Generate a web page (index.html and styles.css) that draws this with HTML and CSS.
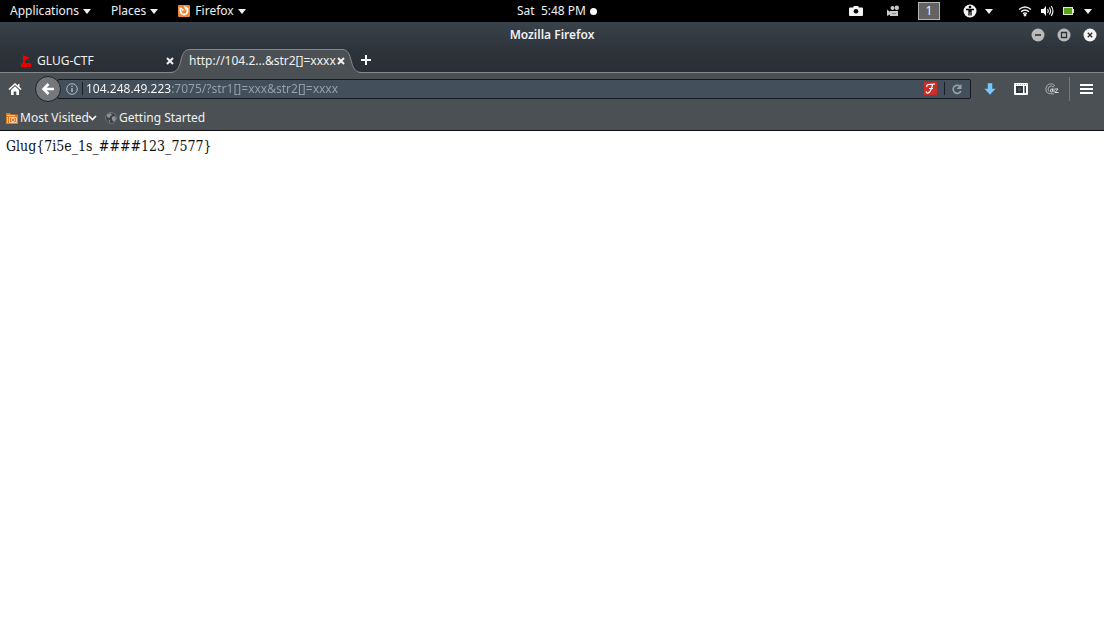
FILE: index.html
```html
<!DOCTYPE html>
<html lang="en">
<head>
    <meta charset="UTF-8">
    <meta name="viewport" content="width=device-width, initial-scale=1.0">
    <title>Mozilla Firefox</title>
    <link rel="stylesheet" href="styles.css">
</head>
<body>
    <header class="top-bar">
        <nav class="menus">
            <button class="menu">Applications <span class="caret"></span></button>
            <button class="menu">Places <span class="caret"></span></button>
            <button class="menu app-menu">
                <svg class="app-icon" width="12" height="12" viewBox="0 0 12 12">
                    <rect width="12" height="12" rx="1" fill="#ed8936"/>
                    <path d="M2.500 2.500V6a3.500 3.500 0 0 0 7 0V3.500L7.500 2.500l.5 2" fill="none" stroke="#fff" stroke-width="1.800"/>
                    <path d="M3 3l3 1.500-1.500 2z" fill="#fff"/>
                </svg>
                Firefox <span class="caret"></span>
            </button>
        </nav>
        <button class="clock">Sat&nbsp; 5:48 PM <span class="dot"></span></button>
        <div class="status">
            <button class="camera" aria-label="Screenshot">
                <svg width="14" height="12" viewBox="0 0 14 12">
                    <path d="M1 2.500h3L5 1h4l1 1.500h3a1 1 0 0 1 1 1V10a1 1 0 0 1-1 1H1a1 1 0 0 1-1-1V3.500a1 1 0 0 1 1-1z" fill="#f4f4f4"/>
                    <circle cx="7" cy="6.300" r="2.300" fill="#000"/>
                </svg>
            </button>
            <button class="recorder" aria-label="Record screen">
                <svg width="14" height="12" viewBox="0 0 14 12" fill="#c9c9c9">
                    <circle cx="6.500" cy="3" r="2"/>
                    <circle cx="10.800" cy="2.700" r="2.200"/>
                    <path d="M1 4.500l3 2.200V6h8v5H4V9.500L1 11z"/>
                    <path d="M6 8.500h4" stroke="#888"/>
                </svg>
            </button>
            <button class="workspace">1</button>
            <button class="access" aria-label="Accessibility">
                <svg width="14" height="14" viewBox="0 0 14 14">
                    <circle cx="7" cy="7" r="6.500" fill="#f4f4f4"/>
                    <circle cx="7" cy="3" r="1.300" fill="#000"/>
                    <path d="M3 5.500h8M7 5v3M6 6v5.500M8 6v5.500" stroke="#000" stroke-width="1.300"/>
                </svg>
                <span class="caret"></span>
            </button>
            <button class="system" aria-label="System menu">
                <svg width="14" height="12" viewBox="0 0 14 12" fill="none" stroke="#eee" stroke-width="1.300">
                    <path d="M1 4.500q6-5 12 0M3 6.700q4-3.500 8 0M5 8.700q2-1.600 4 0"/>
                    <circle cx="7" cy="10" r=".8" fill="#eee"/>
                </svg>
                <svg width="13" height="12" viewBox="0 0 13 12" fill="none" stroke="#eee" stroke-width="1.200">
                    <path d="M0 4h2.500L5 1v10L2.500 8H0z" fill="#fff" stroke="none"/>
                    <path d="M6.500 4q1.500 2 0 4M8.300 2.500q2.500 3.500 0 7M10.200 1q3.500 5 0 10"/>
                </svg>
                <svg width="12" height="8" viewBox="0 0 12 8">
                    <path d="M0 0h10v2h1v4h-1v2H0z" fill="#dcead2"/>
                    <path d="M1 1h8v6H1z" fill="#56a51c"/>
                </svg>
                <span class="caret"></span>
            </button>
        </div>
    </header>

    <div class="title-bar">
        <div></div>
        <h1 class="title">Mozilla Firefox</h1>
        <div class="window-controls">
            <button aria-label="Minimize">
                <svg width="14" height="14" viewBox="0 0 14 14"><circle cx="7" cy="7" r="6.500" fill="#b9bab9"/><path d="M4 7h6" stroke="#2d3136" stroke-width="1.600"/></svg>
            </button>
            <button aria-label="Maximize">
                <svg width="14" height="14" viewBox="0 0 14 14"><circle cx="7" cy="7" r="6.500" fill="#b9bab9"/><path d="M4.500 4.500h5v5h-5z" fill="none" stroke="#2d3136" stroke-width="1.300"/></svg>
            </button>
            <button aria-label="Close">
                <svg width="14" height="14" viewBox="0 0 14 14"><circle cx="7" cy="7" r="6.500" fill="#f5f5f5"/><path d="M4.800 4.800l4.400 4.400M9.200 4.800L4.800 9.200" stroke="#2d3136" stroke-width="1.400"/></svg>
            </button>
        </div>
    </div>

    <div class="tabs">
        <div class="tab">
            <svg width="12" height="14" viewBox="0 0 12 14" fill="#f00000">
                <path d="M3 1l7 3-5 2.500V10H3z"/>
                <path d="M2 9h8.500l1 1.500-1 2.500H1.500L.5 11.500z"/>
                <path d="M3 11.500h2M7 11.500h2" stroke="#7b1013"/>
            </svg>
            <span class="tab-label">GLUG-CTF</span>
            <button class="close" aria-label="Close tab">
                <svg width="8" height="8" viewBox="0 0 8 8"><path d="M1 1l6 6M7 1L1 7" stroke="#f0f0f0" stroke-width="2"/></svg>
            </button>
        </div>
        <div class="tab selected">
            <svg class="tab-shape" viewBox="0 0 192 24" preserveAspectRatio="none">
                <path d="M0 24C15 24 7 .5 20 .5H172C185 .5 177 23.500 192 24z" fill="#4b5054"/>
                <path d="M0 23.500C15 23.500 7 .5 20 .5H172C185 .5 177 23.500 192 23.500" fill="none" stroke="#85898c"/>
            </svg>
            <span class="tab-label">http://104.2...&amp;str2[]=xxxx</span>
            <button class="close" aria-label="Close tab">
                <svg width="8" height="8" viewBox="0 0 8 8"><path d="M1 1l6 6M7 1L1 7" stroke="#f0f0f0" stroke-width="2"/></svg>
            </button>
        </div>
        <button class="new-tab" aria-label="New tab">
            <svg width="12" height="12" viewBox="0 0 12 12"><path d="M6 1v10M1 6h10" stroke="#f4f4f4" stroke-width="2"/></svg>
        </button>
    </div>

    <div class="nav-bar">
        <button class="home" aria-label="Home">
            <svg width="14" height="14" viewBox="0 0 14 14" fill="#fff">
                <path d="M1 7.500L7 2l6 5.500" fill="none" stroke="#fff" stroke-width="1.600"/>
                <path d="M3 8l4-3.700L11 8v5H8.300V9.500H5.700V13H3zM10 2h1.500v4L10 4.500z"/>
            </svg>
        </button>
        <button class="back" aria-label="Back">
            <svg width="14" height="14" viewBox="0 0 14 14"><path d="M7.500 2L2.500 7l5 5M3 7h10" fill="none" stroke="#fff" stroke-width="2.600"/></svg>
        </button>
        <form class="url-bar">
            <svg width="12" height="12" viewBox="0 0 12 12" fill="none" stroke="#b4bbc1">
                <circle cx="6" cy="6" r="5.300"/>
                <path d="M6 5v4M6 2.700v1.300" stroke-width="1.400"/>
            </svg>
            <span class="divider"></span>
            <input class="url" type="text" aria-label="Address" value="104.248.49.223:7075/?str1[]=xxx&amp;str2[]=xxxx">
            <button class="flash" type="button" aria-label="Flash plugin">
                <svg width="13" height="13" viewBox="0 0 13 13">
                    <rect width="13" height="13" fill="#c92f27"/>
                    <path d="M3 5Q2 2.500 5 2.500T11 2M8.500 3Q7 9 5 10.500T2 9.500M5 6.500h4" fill="none" stroke="#fff" stroke-width="1.200"/>
                </svg>
            </button>
            <span class="divider"></span>
            <button class="reload" type="button" aria-label="Reload">
                <svg width="12" height="12" viewBox="0 0 12 12">
                    <path d="M9 3.500A4 4 0 1 0 9.800 8" fill="none" stroke="#98a2aa" stroke-width="1.600"/>
                    <path d="M10.500 1v5h-5z" fill="#98a2aa"/>
                </svg>
            </button>
        </form>
        <div class="tools">
            <button aria-label="Downloads">
                <svg width="14" height="14" viewBox="0 0 14 14"><path d="M4.500 1h5v5.500H13L7 13 1 6.500h3.500z" fill="#7cc5fa" stroke="#354657" stroke-width=".4"/></svg>
            </button>
            <button aria-label="Sidebar">
                <svg width="14" height="12" viewBox="0 0 14 12">
                    <rect width="14" height="12" rx="1" fill="#fff"/>
                    <path d="M2 3h7v7H2z" fill="#34383b"/>
                    <path d="M10.500 3h1.500v7h-1.500z" fill="#34383b"/>
                    <path d="M4 5h3v3H4z" fill="#4f5356"/>
                    <path d="M2 1.500h7M10 1.500h3" stroke="#b5b8ba" stroke-dasharray="1 1"/>
                </svg>
            </button>
            <button aria-label="Cookie manager">
                <svg width="14" height="12" viewBox="0 0 14 12" fill="none" stroke="#a6aaac">
                    <path d="M10 3Q8 0 4.500 1T.8 6 4 10.500l5 .5M9 4Q6 2 4 4t0 4.500"/>
                    <path d="M7 6q-2 0-1.500 2t2 .5V5.500M9 5.500v4M10 6h3l-3 3.500h3.500" stroke="#d4d6d7"/>
                </svg>
            </button>
        </div>
        <button class="hamburger" aria-label="Open menu">
            <svg width="13" height="12" viewBox="0 0 13 12"><path d="M0 2h13M0 6h13M0 10h13" stroke="#fff" stroke-width="2"/></svg>
        </button>
    </div>

    <div class="bookmarks">
        <button class="bookmark">
            <svg width="12" height="12" viewBox="0 0 12 12">
                <path d="M0 1h4l1 1.500h7V12H0z" fill="#e07a22"/>
                <path d="M1 3.500h8M1.500 5v6" stroke="#ffc488"/>
                <path d="M3.500 5.500h7v5h-7z" fill="none" stroke="#ffc999"/>
                <circle cx="7" cy="8" r="1.600" fill="#d36c19" stroke="#ffe0c2" stroke-width=".8"/>
            </svg>
            Most Visited
            <svg class="chevron" width="9" height="8" viewBox="0 0 9 8"><path d="M1 2l3.500 3.500L8 2" fill="none" stroke="#fff" stroke-width="1.600"/></svg>
        </button>
        <a class="bookmark" href="#">
            <svg width="12" height="12" viewBox="0 0 12 12">
                <circle cx="6" cy="6" r="5.500" fill="#3e4347" stroke="#6d7276"/>
                <path d="M2 2.500L5.500 1 7 3 5 4.500 4.500 6 2 5zM7 5l3-1 1 3-2 3-2-2zM3 7.500l2 1V11z" fill="#8b9093"/>
            </svg>
            Getting Started
        </a>
    </div>

    <main class="page">Glug{7i5e_1s_####123_7577}</main>
</body>
</html>
```
FILE: styles.css
```css
:root {
    --chrome: #4b5054;
    --text: #f0f0f0;
}

* {
    margin: 0;
    padding: 0;
    box-sizing: border-box;
}

body {
    min-height: 100vh;
    display: flex;
    flex-direction: column;
    background: #fff;
    color: var(--text);
    font-family: "Noto Sans", sans-serif;
    font-size: 12px;
    line-height: 16px;
}

button, input {
    font: inherit;
    color: inherit;
    background: none;
    border: 0;
}

button, .bookmark {
    display: flex;
    align-items: center;
    flex-shrink: 0;
    white-space: nowrap;
}

svg {
    display: block;
    flex-shrink: 0;
}

.top-bar {
    display: grid;
    grid-template-columns: 1fr auto 1fr;
    align-items: center;
    height: 22px;
    padding: 0 12px 0 10px;
    background: #000;
}

.menus {
    display: flex;
    gap: 20px;
}

.menu {
    gap: 4px;
}

.app-icon {
    margin-right: 1px;
}

.caret {
    border: 4px solid transparent;
    border-top: 5px solid var(--text);
    border-bottom: 0;
}

.clock {
    gap: 4px;
    margin-left: 12px;
}

.dot {
    width: 7px;
    height: 7px;
    border-radius: 50%;
    background: #fff;
}

.status {
    display: flex;
    justify-content: flex-end;
    align-items: center;
}

.camera {
    margin-right: 23px;
}

.recorder {
    margin-right: 18px;
}

.workspace {
    justify-content: center;
    width: 22px;
    height: 18px;
    margin-right: 23px;
    background: #626262;
    border: 1px solid #b5b5b5;
}

.access {
    gap: 8px;
    margin-right: 25px;
}

.system {
    gap: 9px;
}

.title-bar {
    display: grid;
    grid-template-columns: 1fr auto 1fr;
    align-items: center;
    height: 26px;
    padding: 0 7px;
    background: linear-gradient(#39434b, #2e343b);
}

.title {
    font-size: 12px;
    font-weight: 600;
}

.window-controls {
    display: flex;
    justify-content: flex-end;
    gap: 12px;
}

.tabs {
    display: flex;
    height: 25px;
    background: linear-gradient(#2e343b, #2a2e36);
    border-bottom: 1px solid #85898c;
}

.tab {
    display: flex;
    align-items: center;
    width: 170px;
    gap: 5px;
    padding: 1px 0 0 20px;
}

.tab:first-child .close {
    margin-right: -4px;
}

.tab-label {
    flex: 1;
    white-space: nowrap;
}

.selected {
    position: relative;
    width: 192px;
    height: 25px;
    gap: 1px;
    padding: 0 17px 0 19px;
}

.selected .tab-label,
.selected .close {
    z-index: 1;
}

.tab-shape {
    position: absolute;
    inset: 1px 0 0;
    width: 100%;
    height: 24px;
}

.new-tab {
    margin-left: -2px;
}

.nav-bar {
    display: flex;
    align-items: center;
    height: 31px;
    padding: 0 11px 0 8px;
    background: var(--chrome);
}

.back {
    justify-content: center;
    width: 26px;
    height: 26px;
    margin-left: 13px;
    z-index: 1;
    background: #74787c;
    border: 1px solid #1c2126;
    border-radius: 50%;
}

.url-bar {
    display: flex;
    align-items: center;
    flex: 1;
    height: 20px;
    margin-left: -4px;
    padding: 0 7px 0 8px;
    background: #43505c;
    border: 1px solid #151a1f;
    border-radius: 2px;
}

.divider {
    width: 1px;
    height: 13px;
    margin: 0 3px 0 4px;
    background: #181e24;
}

/* the host is bright, port and path are dimmed */
.url {
    flex: 1;
    min-width: 0;
    background: linear-gradient(90deg, #fff 86px, #98a2aa 86px);
    -webkit-background-clip: text;
    background-clip: text;
    -webkit-text-fill-color: transparent;
}

.flash {
    margin-right: 3px;
}

.reload {
    margin-left: 3px;
}

.tools {
    display: flex;
    align-items: center;
    gap: 17px;
    padding: 0 10px 0 12px;
}

.hamburger {
    height: 24px;
    padding-left: 10px;
    border-left: 1px solid #74787b;
}

.bookmarks {
    display: flex;
    align-items: center;
    gap: 8px;
    height: 27px;
    padding: 1px 6px 0;
    background: var(--chrome);
    border-bottom: 1px solid #111;
}

.bookmark {
    gap: 2px;
    color: var(--text);
    text-decoration: none;
}

.chevron {
    margin-left: -3px;
}

.page {
    flex: 1;
    padding: 7px 6px;
    color: #111;
    font-family: "DejaVu Serif Condensed", "DejaVu Serif", serif;
    font-size: 14px;
}
```
